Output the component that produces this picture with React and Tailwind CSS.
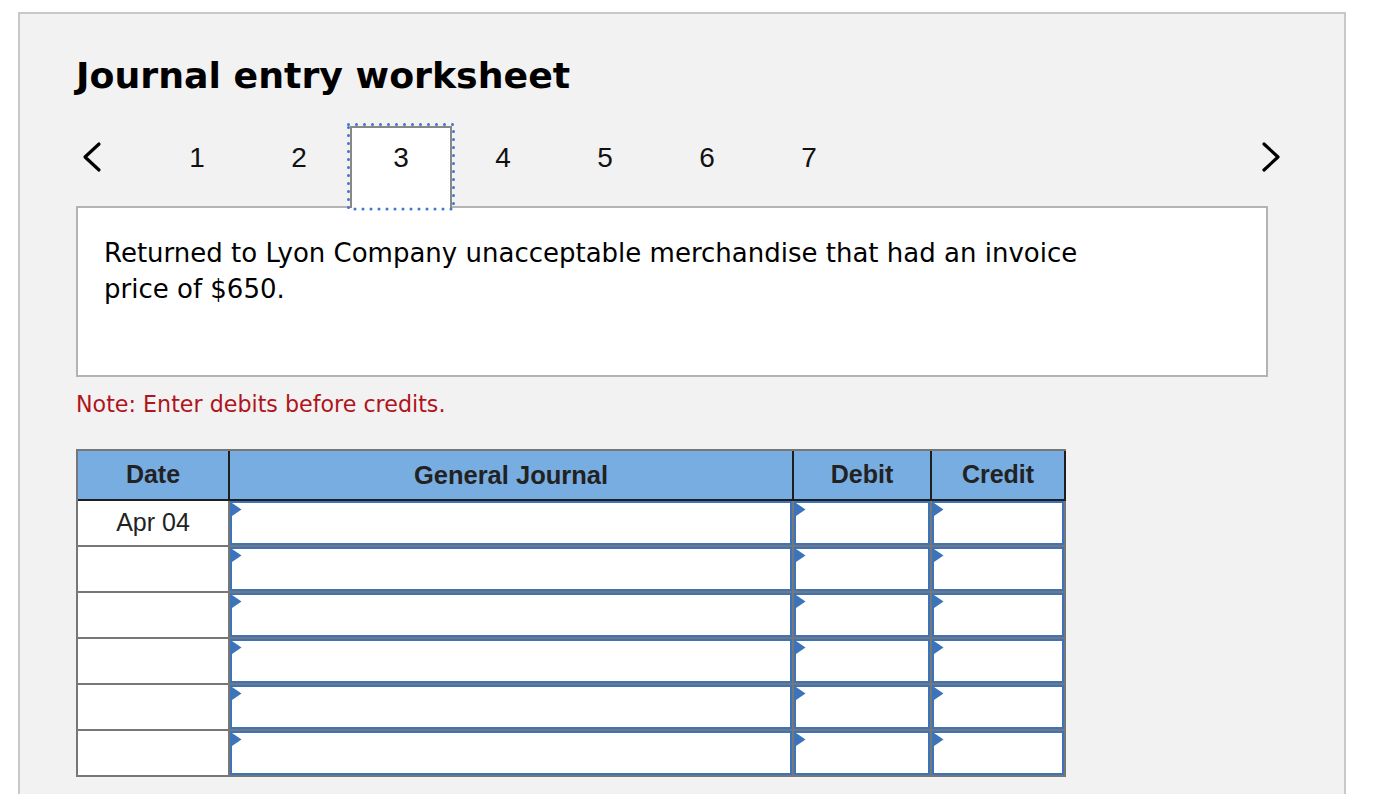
import React from 'react'

const tabs = [1, 2, 3, 4, 5, 6, 7]
const rows = ['Apr 04', '', '', '', '', '']

// little blue marker in the top-left corner of each entry cell
function EntryCell() {
  return (
    <div className="relative h-[44px] bg-white border-2 border-[#3b74ba]">
      <svg className="absolute left-0 top-0" width="10" height="13" viewBox="0 0 10 13">
        <polygon points="0,0 9.5,6.5 0,13" fill="#3b74ba" />
      </svg>
    </div>
  )
}

function Chevron({ dir }) {
  const d = dir === 'left' ? 'M23 18 L9 31 L23 44' : 'M8 18 L22 31 L8 44'
  return (
    <svg width="30" height="82" viewBox="0 0 30 82" className="shrink-0">
      <path d={d} fill="none" stroke="#000" strokeWidth="3.2" strokeLinecap="round" strokeLinejoin="round" />
    </svg>
  )
}

export default function App() {
  const active = 3

  return (
    <div className="min-h-screen bg-white pt-[12px] pl-[18px]">
      <div className="w-[1328px] border-2 border-[#c8c8c8] bg-[#f2f2f2] pl-[56px] pr-[76px] pt-[40px] pb-[40px]">
        <h1 className="font-['DejaVu_Sans',Verdana,sans-serif] font-bold text-[36.3px] leading-[44px] text-black">
          Journal entry worksheet
        </h1>

        {/* step navigation */}
        <div className="mt-[28px] -mr-[18px] flex h-[82px] items-start">
          <Chevron dir="left" />
          <div className="ml-[40px] flex">
            {tabs.map((n) =>
              n === active ? (
                <div
                  key={n}
                  className="relative z-10 h-[82px] w-[102px] border-2 border-b-0 border-[#888] bg-white pt-[16px] text-center font-['Liberation_Sans',Arial,sans-serif] text-[28px] leading-[28px] text-[#111]"
                >
                  {n}
                  <svg className="absolute -left-[5px] -top-[5px]" width="108" height="88" viewBox="0 0 108 88">
                    <rect x="1.5" y="1.5" width="105" height="84.5" fill="none" stroke="#3a78cc" strokeWidth="3" strokeDasharray="0 8" strokeLinecap="round" />
                  </svg>
                </div>
              ) : (
                <div
                  key={n}
                  className="h-[82px] w-[102px] pt-[18px] text-center font-['Liberation_Sans',Arial,sans-serif] text-[28px] leading-[28px] text-[#111]"
                >
                  {n}
                </div>
              )
            )}
          </div>
          <div className="flex-1" />
          <Chevron dir="right" />
        </div>

        {/* question text */}
        <div className="-mt-[2px] h-[171px] border-2 border-[#b3b3b3] bg-white pl-[26px] pt-[27px] font-['DejaVu_Sans',Verdana,sans-serif] text-[26px] leading-[36px] text-black">
          Returned to Lyon Company unacceptable merchandise that had an invoice
          <br />
          price of $650.
        </div>

        <p className="mt-[13px] font-['DejaVu_Sans',Verdana,sans-serif] text-[22.2px] leading-[28px] text-[#b0141c]">
          Note: Enter debits before credits.
        </p>

        {/* journal table */}
        <div className="mt-[31px] w-[990px] bg-[#777] pl-[2px] pt-[2px] pb-[2px] font-['Liberation_Sans',Arial,sans-serif] text-[25px] text-[#222]">
          <div className="grid grid-cols-[150px_562px_136px_132px] gap-x-[2px] bg-[#1e1e1e] pr-[2px] pb-[2px]">
            <div className="flex h-[48px] items-center justify-center bg-[#78ade2] font-bold">Date</div>
            <div className="flex h-[48px] items-center justify-center bg-[#78ade2] font-bold text-[25.5px]">General Journal</div>
            <div className="flex h-[48px] items-center justify-center bg-[#78ade2] font-bold">Debit</div>
            <div className="flex h-[48px] items-center justify-center bg-[#78ade2] font-bold">Credit</div>
          </div>
          <div className="flex flex-col gap-y-[2px]">
            {rows.map((date, i) => (
              <div key={i} className="grid grid-cols-[150px_562px_136px_132px] gap-x-[2px] pr-[2px]">
                <div className="flex h-[44px] items-center justify-center bg-white">{date}</div>
                <EntryCell />
                <EntryCell />
                <EntryCell />
              </div>
            ))}
          </div>
        </div>
      </div>
    </div>
  )
}
